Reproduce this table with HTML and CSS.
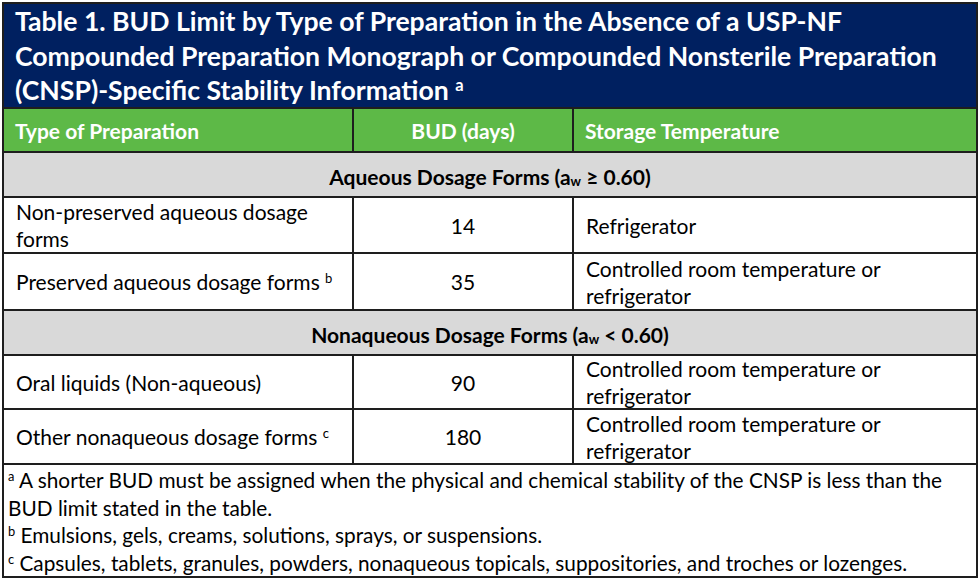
FILE: index.html
```html
<!DOCTYPE html>
<html lang="en">
<head>
<meta charset="utf-8">
<title>Table 1. BUD Limit by Type of Preparation</title>
<link rel="stylesheet" href="styles.css">
</head>
<body>
<div class="sheet">
  <div class="grid">
    <div class="cell title">Table 1. BUD Limit by Type of Preparation in the Absence of a USP-NF<br>Compounded Preparation Monograph or Compounded Nonsterile Preparation<br>(CNSP)-Specific Stability Information <sup class="sup">a</sup></div>

    <div class="cell head"><span>Type of Preparation</span></div>
    <div class="cell head center"><span>BUD (days)</span></div>
    <div class="cell head"><span>Storage Temperature</span></div>

    <div class="cell group"><span>Aqueous Dosage Forms (a<sub class="sub">w</sub> ≥ 0.60)</span></div>

    <div class="cell body"><span>Non-preserved aqueous dosage forms</span></div>
    <div class="cell body center"><span>14</span></div>
    <div class="cell body"><span>Refrigerator</span></div>

    <div class="cell body"><span>Preserved aqueous dosage forms <sup class="sup">b</sup></span></div>
    <div class="cell body center"><span>35</span></div>
    <div class="cell body"><span>Controlled room temperature or refrigerator</span></div>

    <div class="cell group"><span>Nonaqueous Dosage Forms (a<sub class="sub">w</sub> &lt; 0.60)</span></div>

    <div class="cell body"><span>Oral liquids (Non-aqueous)</span></div>
    <div class="cell body center"><span>90</span></div>
    <div class="cell body"><span>Controlled room temperature or refrigerator</span></div>

    <div class="cell body"><span>Other nonaqueous dosage forms <sup class="sup">c</sup></span></div>
    <div class="cell body center"><span>180</span></div>
    <div class="cell body"><span>Controlled room temperature or refrigerator</span></div>

    <div class="cell notes">
      <p class="note"><sup class="sup">a</sup> A shorter BUD must be assigned when the physical and chemical stability of the CNSP is less than the BUD limit stated in the table.</p>
      <p class="note"><sup class="sup">b</sup> Emulsions, gels, creams, solutions, sprays, or suspensions.</p>
      <p class="note"><sup class="sup">c</sup> Capsules, tablets, granules, powders, nonaqueous topicals, suppositories, and troches or lozenges.</p>
    </div>
  </div>
</div>
</body>
</html>
```

FILE: styles.css
```css
*, *::before, *::after {
  box-sizing: border-box;
}

html, body {
  margin: 0;
  padding: 0;
  background: #ffffff;
}

.sheet {
  padding: 2px;
  width: 980px;
  font-family: "Lato", "Liberation Sans", sans-serif;
  color: #000;
}

.grid {
  display: grid;
  grid-template-columns: 348px 218px 1fr;
  grid-template-rows: 103px 42px 43px 54px 55px 43px 52px 53px 111px;
  gap: 2px;
  padding: 2px;
  background: #1e1e1e;
}

.cell {
  background: #fff;
  display: flex;
  align-items: center;
  padding: 0 11px;
  font-size: 21px;
  line-height: 27px;
  overflow: hidden;
}

.center {
  justify-content: center;
  text-align: center;
}

.title {
  grid-column: 1 / -1;
  display: block;
  background: #002060;
  color: #fff;
  font-weight: 700;
  font-size: 26.6px;
  line-height: 34.5px;
  padding: 0 11px;
  white-space: nowrap;
}

.head {
  background: #5db947;
  color: #fff;
  font-weight: 700;
}

.group {
  grid-column: 1 / -1;
  background: #d9d9d9;
  justify-content: center;
  font-weight: 700;
  padding-top: 3px;
}

.body {
  padding: 0 12px;
}

.body.center {
  padding: 0;
}

.notes {
  grid-column: 1 / -1;
  display: block;
  padding: 1px 4px;
  font-size: 20.8px;
  line-height: 27.5px;
}

.note {
  margin: 0;
}

.sup {
  font-size: 0.62em;
  line-height: 1;
  vertical-align: 0.55em;
}

.sub {
  font-size: 0.62em;
  line-height: 1;
  vertical-align: -0.1em;
}
```
